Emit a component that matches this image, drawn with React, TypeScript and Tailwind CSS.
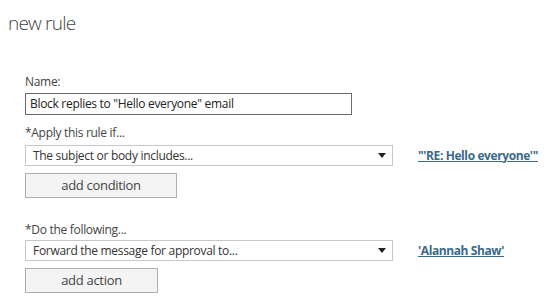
import React from "react";

function Arrow() {
  return (
    <svg width="8" height="5" viewBox="0 0 8 5" className="shrink-0">
      <path d="M0 0 L8 0 L4 5 Z" fill="#222" />
    </svg>
  );
}

function Select({ text }: { text: string }) {
  return (
    <div className="flex h-[21px] w-[368px] items-center justify-between border border-[#c8c8c8] bg-white pl-[7px] pr-[6px] text-[12px] leading-none tracking-[-0.3px] text-[#333]">
      <span>{text}</span>
      <Arrow />
    </div>
  );
}

export default function App() {
  return (
    <div className="h-[302px] w-[560px] overflow-hidden bg-white font-['Open_Sans',sans-serif] text-[#333]">
      <div className="pl-[8px] pt-[10px] text-[19px] font-light leading-[26px] tracking-[-0.8px] text-[#444]">new rule</div>
      <div className="flex flex-col pl-[25px] pt-[38px]">
        <div className="text-[12px] leading-[16px] tracking-[-0.3px] text-[#444]">Name:</div>
        <div className="mt-[3px] flex h-[22px] w-[327px] items-center border border-[#6b6b6b] pl-[4px] text-[12px] leading-none tracking-[-0.3px] text-[#222]">
          Block replies to "Hello everyone" email
        </div>
        <div className="mt-[10px] text-[12px] leading-[16px] tracking-[-0.3px] text-[#444]">*Apply this rule if...</div>
        <div className="mt-[4px] flex items-center gap-[25px]">
          <Select text="The subject or body includes..." />
          <a className="text-[12px] font-bold tracking-[-0.4px] text-[#3a6a88] underline">"'RE: Hello everyone'"</a>
        </div>
        <div className="mt-[7px] flex h-[25px] w-[152px] items-center justify-center border border-[#a9b0b0] bg-[#f4f4f4] text-[13px] tracking-[-0.3px] text-[#444]">
          add condition
        </div>
        <div className="mt-[24px] text-[12px] leading-[16px] tracking-[-0.3px] text-[#444]">*Do the following...</div>
        <div className="mt-[2px] flex items-center gap-[25px]">
          <Select text="Forward the message for approval to..." />
          <a className="text-[12px] font-bold tracking-[-0.4px] text-[#3a6a88] underline">'Alannah Shaw'</a>
        </div>
        <div className="mt-[7px] flex h-[25px] w-[133px] items-center justify-center border border-[#a9b0b0] bg-[#f4f4f4] text-[13px] tracking-[-0.3px] text-[#444]">
          add action
        </div>
      </div>
    </div>
  );
}
